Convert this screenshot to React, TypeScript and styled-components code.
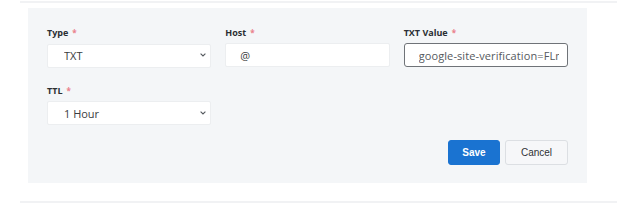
import React from 'react';
import styled, { createGlobalStyle } from 'styled-components';

const GlobalStyle = createGlobalStyle`
html, body {
    margin: 0;
    padding: 0;
    background: #ffffff;
    font-family: "Open Sans", "Liberation Sans", sans-serif;
}
`;

const Page = styled.div`
width: 640px;
height: 206px;
padding: 1px 23px 0 20px;
box-sizing: border-box;
`;

const Rule = styled.div`
height: 2px;
background-color: #f1f2f4;
`;

const Panel = styled.form`
margin: 5px 30px 18px 8px;
padding: 19px 19px 18px 19px;
background-color: #f4f6f8;
`;

const FieldGrid = styled.div`
display: grid;
grid-template-columns: repeat(3, 1fr);
column-gap: 14px;
row-gap: 17px;
`;

const Field = styled.div`
display: flex;
flex-direction: column;
`;

const Label = styled.label`
font-size: 9px;
line-height: 12px;
font-weight: 700;
color: #2b2f33;
margin-bottom: 4px;
`;

const Required = styled.span`
color: #ea7f8b;
font-size: 8px;
margin-left: 4px;
`;

const SelectWrap = styled.div`
position: relative;
`;

const Select = styled.select`
appearance: none;
width: 100%;
height: 24px;
padding: 0 24px 0 16px;
border: 1px solid #eceef0;
border-radius: 2px;
background-color: #ffffff;
font-family: inherit;
font-size: 11px;
color: #3a3d40;
outline: none;
`;

const Chevron = styled.svg`
position: absolute;
right: 5px;
top: 10px;
width: 6px;
height: 4px;
pointer-events: none;
`;

const Input = styled.input<{ focused?: boolean }>`
box-sizing: border-box;
width: 100%;
height: 24px;
padding: 0 8px 0 14px;
border: 1px solid ${({ focused }) => focused ? '#6f7378' : '#eceef0'};
border-radius: ${({ focused }) => focused ? 3 : 2}px;
background-color: #ffffff;
font-family: inherit;
font-size: 11px;
letter-spacing: 0.1px;
color: ${({ focused }) => focused ? '#55595e' : '#3a3d40'};
outline: none;
`;

const Actions = styled.div`
display: flex;
justify-content: flex-end;
gap: 5px;
margin-top: 15px;
`;

const Button = styled.button<{ primary?: boolean }>`
height: 25px;
padding: 0;
width: ${({ primary }) => primary ? 52 : 63}px;
border-radius: 3px;
font-family: "Liberation Sans", Arial, sans-serif;
font-size: 10px;
font-weight: ${({ primary }) => primary ? 700 : 400};
color: ${({ primary }) => primary ? '#ffffff' : '#2f3235'};
background-color: ${({ primary }) => primary ? '#1a73d1' : '#f6f7f9'};
border: 1px solid ${({ primary }) => primary ? '#1a73d1' : '#dcdfe3'};
`;

const ChevronIcon = () => (
    <Chevron viewBox="0 0 6 4">
        <path d="M0.6 0.6 L3 3 L5.4 0.6" fill="none" stroke="#55595e" strokeWidth="1.1" />
    </Chevron>
);

const App: React.FC = () => {
    return (
        <Page>
            <GlobalStyle />
            <Rule />
            <Panel onSubmit={(e) => e.preventDefault()}>
                <FieldGrid>
                    <Field>
                        <Label>Type<Required>*</Required></Label>
                        <SelectWrap>
                            <Select defaultValue="TXT">
                                <option>TXT</option>
                                <option>A</option>
                                <option>CNAME</option>
                            </Select>
                            <ChevronIcon />
                        </SelectWrap>
                    </Field>
                    <Field>
                        <Label>Host<Required>*</Required></Label>
                        <Input defaultValue="@" />
                    </Field>
                    <Field>
                        <Label>TXT Value<Required>*</Required></Label>
                        <Input focused defaultValue="google-site-verification=FLmXq" />
                    </Field>
                    <Field>
                        <Label>TTL<Required>*</Required></Label>
                        <SelectWrap>
                            <Select defaultValue="1 Hour">
                                <option>1 Hour</option>
                                <option>1 Day</option>
                            </Select>
                            <ChevronIcon />
                        </SelectWrap>
                    </Field>
                </FieldGrid>
                <Actions>
                    <Button primary type="submit">Save</Button>
                    <Button type="button">Cancel</Button>
                </Actions>
            </Panel>
            <Rule />
        </Page>
    );
};

export default App;
